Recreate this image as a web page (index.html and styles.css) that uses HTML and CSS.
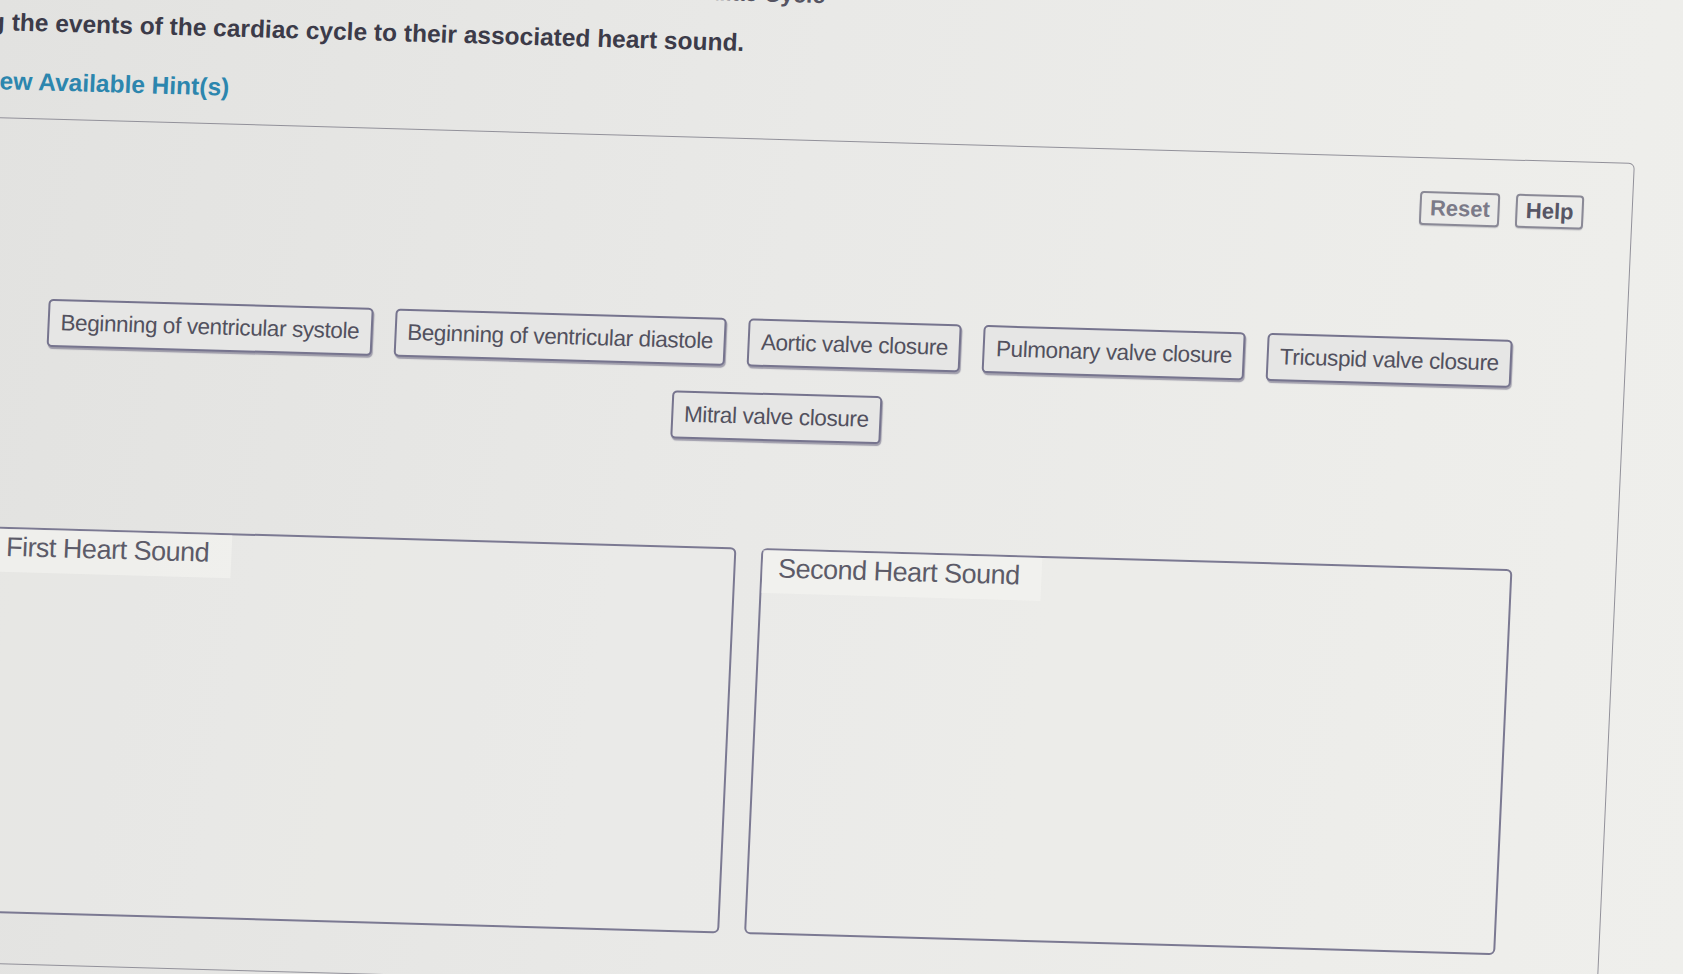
FILE: index.html
```html
<!DOCTYPE html>
<html lang="en">
<head>
<meta charset="utf-8">
<title>Events of the Cardiac Cycle</title>
<link rel="stylesheet" href="styles.css">
</head>
<body>
<div class="stage">
  <div class="crumb">Part A - Events of the Cardiac Cycle</div>
  <p class="prompt">Drag the events of the cardiac cycle to their associated heart sound.</p>
  <a class="hint" href="#">View Available Hint(s)</a>
  <section class="panel">
    <div class="toolbar">
      <button class="btn btn-reset" type="button">Reset</button>
      <button class="btn btn-help" type="button">Help</button>
    </div>
    <div class="chips">
      <div class="chip">Beginning of ventricular systole</div>
      <div class="chip">Beginning of ventricular diastole</div>
      <div class="chip">Aortic valve closure</div>
      <div class="chip">Pulmonary valve closure</div>
      <div class="chip">Tricuspid valve closure</div>
      <div class="chip">Mitral valve closure</div>
    </div>
    <div class="zones">
      <div class="zone"><div class="zone-label">First Heart Sound</div></div>
      <div class="zone"><div class="zone-label">Second Heart Sound</div></div>
    </div>
  </section>
</div>
</body>
</html>
```
FILE: styles.css
```css
html, body {
  margin: 0;
  padding: 0;
  width: 1683px;
  height: 974px;
  overflow: hidden;
}
body {
  background: linear-gradient(100deg, #e2e2e0 0%, #e9e9e7 45%, #ededea 80%, #efefec 100%);
  font-family: "Liberation Sans", Arial, sans-serif;
}
.stage {
  width: 1683px;
  transform: matrix(1, 0.028, -0.045, 1, 0, 0);
  transform-origin: 0 0;
}
.crumb {
  margin-top: -42px;
  width: 826px;
  height: 28px;
  line-height: 28px;
  text-align: right;
  font-size: 23px;
  font-weight: bold;
  color: #555462;
  white-space: nowrap;
}
.prompt {
  margin: 14px 0 0 0;
  line-height: 44px;
  font-size: 24.5px;
  font-weight: bold;
  color: #3c3b49;
  text-indent: -48px;
  white-space: nowrap;
}
.hint {
  display: block;
  margin: 22px 0 0 -17.5px;
  line-height: 30px;
  font-size: 24.5px;
  font-weight: bold;
  color: #2c86ae;
  text-decoration: none;
  white-space: nowrap;
}
.panel {
  box-sizing: border-box;
  margin: 21px 0 0 -50px;
  width: 1692px;
  height: 846px;
  border: 1.5px solid #92919a;
  border-radius: 0 6px 0 0;
}
.toolbar {
  display: flex;
  justify-content: flex-end;
  gap: 16px;
  padding: 33px 48px 0 0;
}
.btn {
  box-sizing: border-box;
  height: 34px;
  padding: 0 8px;
  border: 2px solid #8a8996;
  border-radius: 4px;
  background: #ebebe9;
  font-family: "Liberation Sans", Arial, sans-serif;
  font-size: 22px;
  font-weight: bold;
  line-height: 30px;
  box-shadow: 0 1px 1px rgba(80, 78, 100, 0.25);
}
.btn-reset { color: #7b7a88; }
.btn-help { color: #575665; }
.chips {
  display: flex;
  flex-wrap: wrap;
  justify-content: center;
  column-gap: 22px;
  row-gap: 26px;
  margin-top: 112px;
  padding: 0 80px;
}
.chip {
  box-sizing: border-box;
  height: 48px;
  padding: 9px 11px;
  border: 2px solid #76748e;
  border-radius: 5px;
  background: #e6e6e5;
  color: #52515e;
  font-size: 22.5px;
  letter-spacing: -0.4px;
  line-height: 26px;
  white-space: nowrap;
  box-shadow: 1px 2px 1px rgba(70, 66, 100, 0.45);
}
.zones {
  display: grid;
  grid-template-columns: 747px 751px;
  column-gap: 25px;
  margin: 107px 0 0 63.5px;
}
.zone {
  box-sizing: border-box;
  height: 386px;
  border: 2px solid #7b7992;
  border-radius: 6px;
  background: rgba(238, 238, 236, 0.35);
}
.zone-label {
  display: inline-block;
  padding: 2px 22px 9px 16px;
  line-height: 32px;
  font-size: 27px;
  letter-spacing: -0.5px;
  color: #5c5b68;
  background: rgba(245, 245, 243, 0.55);
}
```
